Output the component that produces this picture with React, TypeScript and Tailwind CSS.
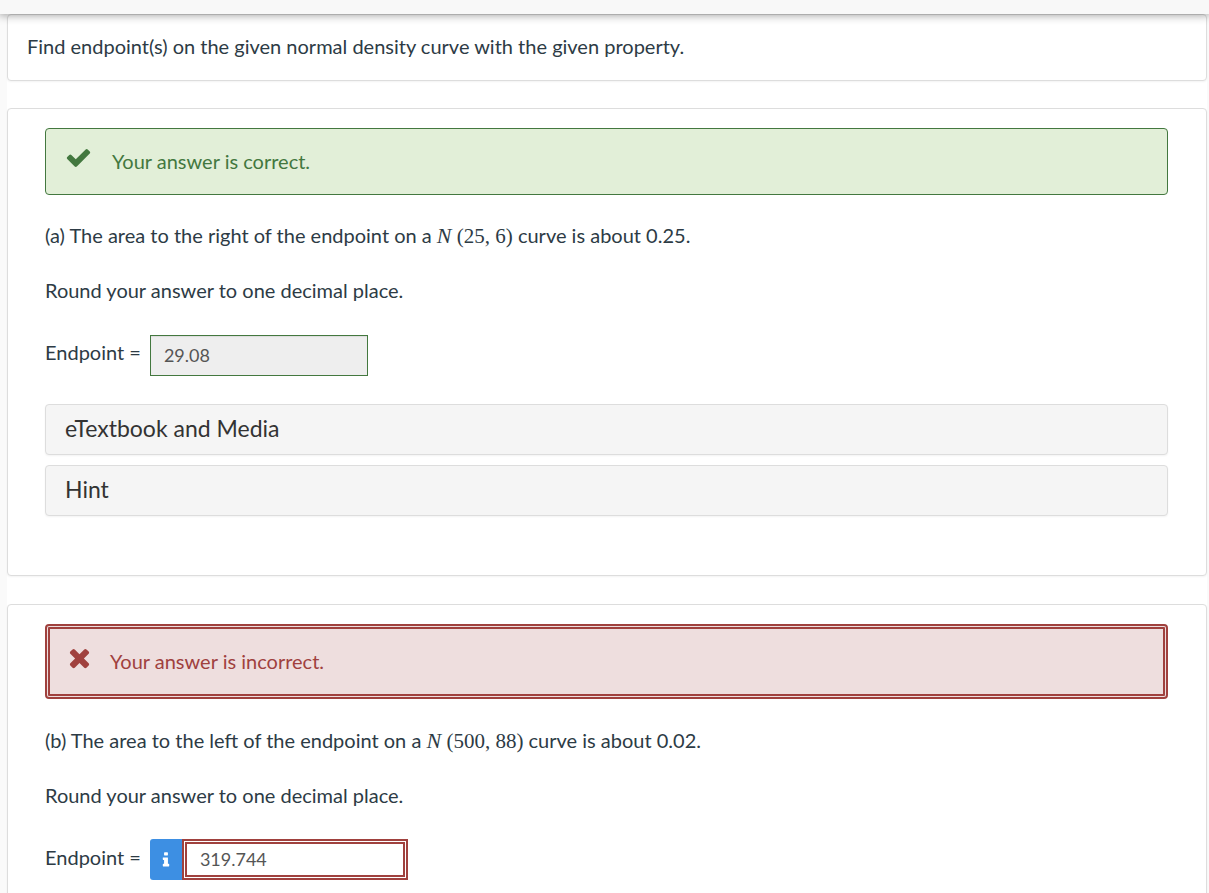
import type { ReactNode } from 'react';

const icons = {
    check: 'M1671 566q0 40-28 68l-724 724-136 136q-28 28-68 28t-68-28l-136-136-362-362q-28-28-28-68t28-68l136-136q28-28 68-28t68 28l294 295 656-657q28-28 68-28t68 28l136 136q28 28 28 68z',
    times: 'M1490 1322q0 40-28 68l-136 136q-28 28-68 28t-68-28l-294-294-294 294q-28 28-68 28t-68-28l-136-136q-28-28-28-68t28-68l294-294-294-294q-28-28-28-68t28-68l136-136q28-28 68-28t68 28l294 294 294-294q28-28 68-28t68 28l136 136q28 28 28 68t-28 68l-294 294 294 294q28 28 28 68z',
    info: 'M1216 1344v128q0 26-19 45t-45 19h-512q-26 0-45-19t-19-45v-128q0-26 19-45t45-19h64v-384h-64q-26 0-45-19t-19-45v-128q0-26 19-45t45-19h384q26 0 45 19t19 45v576h64q26 0 45 19t19 45zm-128-1152v192q0 26-19 45t-45 19h-256q-26 0-45-19t-19-45v-192q0-26 19-45t45-19h256q26 0 45 19t19 45z',
};

function Icon({ name, className }: { name: keyof typeof icons; className: string }) {
    return (
        <svg viewBox="0 0 1792 1792" fill="currentColor" aria-hidden="true" className={className}>
            <path d={icons[name]} />
        </svg>
    );
}

function Card({ children, className }: { children: ReactNode; className: string }) {
    return (
        <section className={`rounded-[4px] border border-[#dddddd] bg-white shadow-xs ${className}`}>
            {children}
        </section>
    );
}

function Normal({ mean, sd }: { mean: number; sd: number }) {
    return (
        <span className="font-['Liberation_Serif',serif] text-[21px] leading-none">
            <i className="text-[22px]">N</i> ({mean}, {sd})
        </span>
    );
}

function Panel({ title }: { title: string }) {
    return (
        <button className="rounded-[4px] border border-[#dddddd] bg-[#f5f5f5] px-[19px] pt-[9px] pb-[12px] text-left shadow-xs">
            {title}
        </button>
    );
}

export default function App() {
    return (
        <div className="h-screen overflow-hidden bg-[#fafafa] font-['Lato',sans-serif] text-[20px] leading-[28px] text-[#2d3b45]">
            <div className="relative h-[14px] bg-[#f8f8f8] shadow-[0_0_10px_1px_rgba(0,0,0,0.4)]"></div>
            <main className="ml-[7px] mr-[2px] flex flex-col gap-[27px] bg-white">
                <Card className="px-[19px] pt-[17px] pb-[20px]">
                    <p>Find endpoint(s) on the given normal density curve with the given property.</p>
                </Card>

                {/* Part a */}
                <Card className="pt-[19px] pr-[38px] pb-[59px] pl-[37px]">
                    <div role="status" className="flex h-[67px] items-center rounded-[4px] border border-[#43783f] bg-[#e2efd8] pb-[2px] pl-[19px] text-[#43783f]">
                        <Icon name="check" className="mr-[20px] mb-[6px] size-[27px]" />
                        <span>Your answer is correct.</span>
                    </div>
                    <p className="mt-[26px]">
                        (a) The area to the right of the endpoint on a <Normal mean={25} sd={6} /> curve is about 0.25.
                    </p>
                    <p className="mt-[27px]">Round your answer to one decimal place.</p>
                    <div className="mt-[31px] flex items-start">
                        <label htmlFor="endpoint-a" className="mt-[3px] mr-[9px]">Endpoint =</label>
                        <input id="endpoint-a" readOnly value="29.08" className="h-[41px] w-[218px] border border-[#43783f] bg-[#eeeeee] px-[13px] pb-[2px] text-[18px] text-[#555555] shadow-[inset_0_1px_1px_rgba(0,0,0,0.075)]" />
                    </div>
                    <div className="mt-[28px] flex flex-col gap-[10px] text-[23px] text-[#333333]">
                        <Panel title="eTextbook and Media" />
                        <Panel title="Hint" />
                    </div>
                </Card>

                {/* Part b */}
                <Card className="mt-[1px] pt-[19px] pr-[38px] pb-[59px] pl-[37px]">
                    <div role="status" className="flex h-[75px] items-center rounded-[4px] border-[5px] border-double border-[#a0413e] bg-[#eedede] pb-[2px] pl-[15px] text-[#a0413e]">
                        <Icon name="times" className="mr-[16px] mb-[6px] size-[29px]" />
                        <span>Your answer is incorrect.</span>
                    </div>
                    <p className="mt-[27px]">
                        (b) The area to the left of the endpoint on a <Normal mean={500} sd={88} /> curve is about 0.02.
                    </p>
                    <p className="mt-[27px]">Round your answer to one decimal place.</p>
                    <div className="mt-[30px] flex items-start">
                        <label htmlFor="endpoint-b" className="mt-[4px] mr-[9px]">Endpoint =</label>
                        <button aria-label="More information" className="flex h-[41px] w-[32px] items-center justify-center rounded-l-[3px] bg-[#3d8fe3] text-white">
                            <Icon name="info" className="size-[18px]" />
                        </button>
                        <input id="endpoint-b" defaultValue="319.744" className="h-[41px] w-[226px] border-[5px] border-double border-[#a0413e] bg-white px-[13px] pb-[2px] text-[18px] text-[#555555]" />
                    </div>
                </Card>
            </main>
        </div>
    );
}
